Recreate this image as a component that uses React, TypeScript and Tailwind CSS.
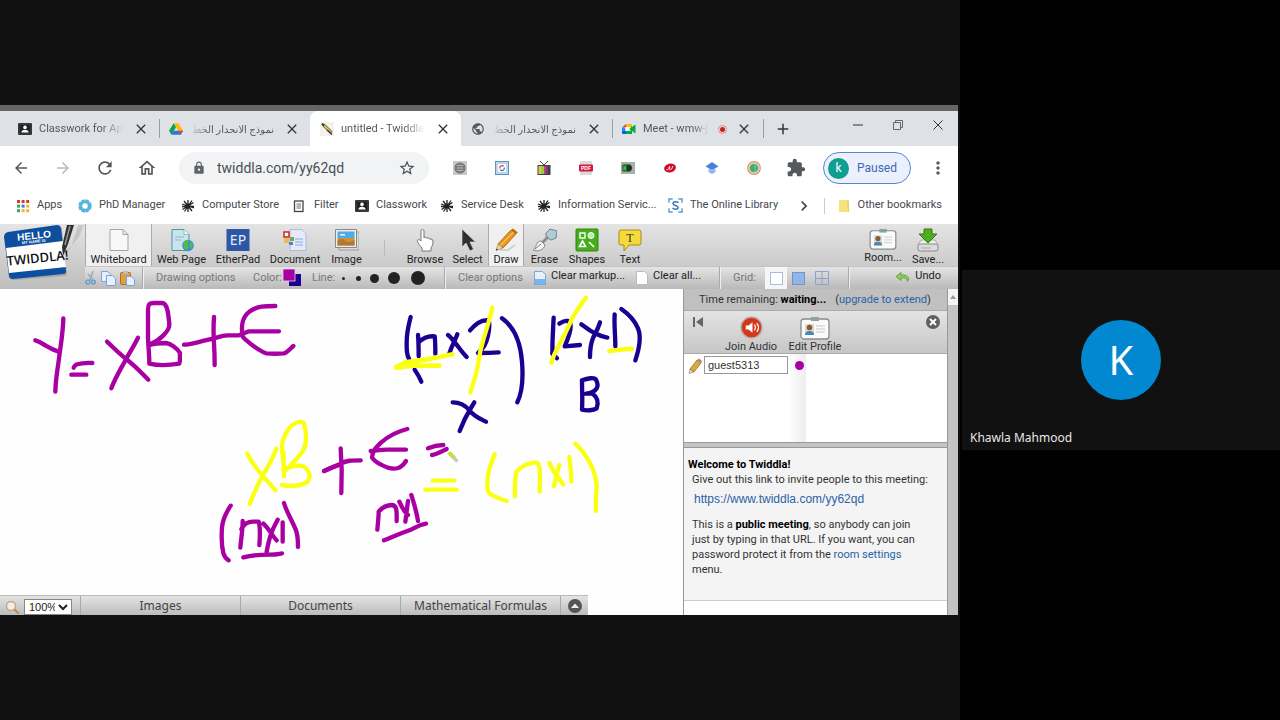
import React from "react";
import {
  MdAdd,
  MdArrowBack,
  MdArrowForward,
  MdChevronRight,
  MdClose,
  MdExtension,
  MdLock,
  MdMoreVert,
  MdOutlineHome,
  MdPublic,
  MdRefresh,
  MdStarBorder,
} from "react-icons/md";

const PURPLE = "#a800a2";
const NAVY = "#1c0092";
const YELLOW = "#fbff12";

/* ---------- small drawings ---------- */

const ClassroomIcon = () => (
  <svg viewBox="0 0 14 14" className="size-[14px] shrink-0">
    <rect y="1" width="14" height="12" rx="1" fill="#34383c" />
    <rect x="2" y="3" width="10" height="8" fill="#222" />
    <circle cx="7" cy="5.4" r="1.8" fill="#fff" />
    <path d="M3.4 10.6c0-2 1.6-2.8 3.6-2.8s3.6.8 3.6 2.8z" fill="#fff" />
  </svg>
);

const DriveIcon = () => (
  <svg viewBox="0 0 24 22" className="size-[14px] shrink-0">
    <path d="M8 1h8l8 13h-8z" fill="#ffba00" />
    <path d="M8 1l4 7-8 13-4-7z" fill="#0f9d58" />
    <path d="M8 14h16l-4 7H4z" fill="#2a74e8" />
    <path d="M16 14h8l-4 7z" fill="#e94335" />
  </svg>
);

const PencilFavicon = () => (
  <svg viewBox="0 0 14 14" className="size-[14px] shrink-0">
    <rect width="14" height="14" fill="#f1f1ee" />
    <path d="M2 2l3 .5 7 7-1.500 1.800-7.500-7z" fill="#d9c14a" stroke="#4a4520" strokeWidth=".8" />
    <path d="M7 8l5 4.500" stroke="#333" strokeWidth="1.4" />
    <path d="M2 1.600l2 2" stroke="#3a3a3a" strokeWidth="1.6" />
  </svg>
);

const MeetIcon = () => (
  <svg viewBox="0 0 14 14" className="size-[14px] shrink-0">
    <path d="M0 5.500L4 2v3.500z" fill="#ea4335" />
    <path d="M4 2h6v3H4z" fill="#fbbc04" />
    <path d="M0 5.500h3.500V9H0z" fill="#2684fc" />
    <path d="M0 9h4v3H1a1 1 0 0 1-1-1z" fill="#0066da" />
    <path d="M3.500 5h4v4h-4z" fill="#fff" />
    <path d="M4 9h6v3H4zM7.500 7L10 4v1l3.500-2.500v9L10 9v1z" fill="#00ac47" />
  </svg>
);

const AppsIcon = () => {
  const colors = ["#d93a30", "#d93a30", "#d93a30", "#3ba55a", "#3b7be0", "#f0b429", "#3ba55a", "#f0b429", "#f0b429"];
  return (
    <svg viewBox="0 0 14 14" className="size-[14px] shrink-0">
      {colors.map((c, i) => (
        <rect key={i} x={1 + (i % 3) * 4.6} y={1 + Math.floor(i / 3) * 4.6} width="3" height="3" fill={c} />
      ))}
    </svg>
  );
};

const RingIcon = () => (
  <svg viewBox="0 0 14 14" className="size-[14px] shrink-0">
    <circle cx="7" cy="7" r="4.700" fill="none" stroke="#55b4dc" strokeWidth="4" strokeDasharray="2.900 .8" />
    <circle cx="7" cy="7" r="4.500" fill="none" stroke="#55b4dc" strokeWidth="2.500" />
  </svg>
);

const SpiderStar = () => (
  <svg viewBox="0 0 14 14" className="size-[14px] shrink-0" stroke="#222" strokeWidth="1.300" fill="none">
    <path d="M7 1v12M1 5l12 4M1.500 10.500l11-7M3 2l8 10M11 1.500L3.500 12.500M1 7.500h12" />
    <circle cx="7" cy="7" r="1.800" fill="#222" />
  </svg>
);

const SheetIcon = () => (
  <svg viewBox="0 0 14 14" className="size-[14px] shrink-0" stroke="#444" fill="none">
    <rect x="1.500" y="2" width="8.500" height="10.500" strokeWidth="1.300" />
    <path d="M3.500 5h4.500M3.500 7h4.500M3.500 9h4.500" strokeWidth=".8" />
  </svg>
);

const LibraryIcon = () => (
  <svg viewBox="0 0 16 16" className="size-[15px] shrink-0" fill="none" stroke="#5a9bd5" strokeWidth="1.500">
    <path d="M1 5V1h4M11 1h4v4M15 11v4h-4M5 15H1v-4" />
    <path d="M11 5.200C10 3.600 5.400 3.600 5.400 6c0 2.300 5.400 1.600 5.400 4.200 0 2.500-4.800 2.300-5.800.4" stroke="#3b76b8" strokeWidth="1.600" />
  </svg>
);

const FolderIcon = () => (
  <svg viewBox="0 0 14 14" className="size-[14px] shrink-0">
    <path d="M2 1h9l1 1v11H2z" fill="#f7e27d" />
    <path d="M10 1l2 1v11h-1z" fill="#ecd15c" />
  </svg>
);

/* ---------- browser extensions ---------- */

const extensions: { name: string; art: React.ReactNode }[] = [
  {
    name: "Globe tool",
    art: (
      <>
        <rect width="14" height="14" fill="#c9c9c9" />
        <circle cx="7" cy="7" r="5.500" fill="#666" />
        <path d="M2 7h10M7 2v10M3 4.500h8M3 9.500h8M5 2.500v9M9 2.500v9" stroke="#bbb" strokeWidth=".7" />
      </>
    ),
  },
  {
    name: "Sync",
    art: (
      <>
        <rect x=".5" y=".5" width="13" height="13" fill="#b9d8ee" stroke="#5b93bd" />
        <rect x="3" y="3" width="8" height="8" fill="#fff" />
        <path d="M4.700 7.500a2.400 2.400 0 0 1 4-2.200" stroke="#d33" fill="none" strokeWidth="1.200" />
        <path d="M9.300 6.500a2.400 2.400 0 0 1-4 2.300" stroke="#2a6fc0" fill="none" strokeWidth="1.200" />
      </>
    ),
  },
  {
    name: "TV",
    art: (
      <>
        <path d="M3 0l4 4 4-4" stroke="#444" fill="none" />
        <rect x=".5" y="4" width="13" height="10" fill="#4a3a3a" />
        <path d="M1.500 5h2.500v8H1.500z" fill="#e8c93a" />
        <path d="M4 5h3v8H4z" fill="#8fd04a" />
        <path d="M7 5h2.500v8H7z" fill="#d23a6a" />
        <path d="M9.500 5H11v8H9.500z" fill="#3c55b8" />
      </>
    ),
  },
  {
    name: "PDF",
    art: (
      <>
        <rect x="1" width="12" height="14" rx="1" fill="#dadada" />
        <rect y="3.500" width="14" height="7" rx="1" fill="#d8173f" />
        <text x="7" y="9" textAnchor="middle" fontSize="5" fontWeight="700" fill="#fff" fontFamily="Liberation Sans">
          PDF
        </text>
      </>
    ),
  },
  {
    name: "Camera",
    art: (
      <>
        <rect y="1" width="14" height="12" fill="#a9b0a9" />
        <rect x="1" y="3" width="9" height="8" rx="2" fill="#3f7a4a" />
        <circle cx="8" cy="7" r="3" fill="#1d3324" />
        <circle cx="4" cy="7" r="1.600" fill="#35c455" />
      </>
    ),
  },
  {
    name: "Mendeley",
    art: (
      <>
        <ellipse cx="7" cy="7" rx="6" ry="4.400" fill="#cf0a2c" transform="rotate(-15 7 7)" />
        <path d="M3.500 8.500c2 1 2-1 3-3 .5 2-.5 3 1 3s1.500-2 2.500-3.500" stroke="#fff" fill="none" strokeWidth="1" />
      </>
    ),
  },
  {
    name: "Scholar",
    art: (
      <>
        <path d="M7 1l6.500 4.500L7 9 .5 5.500z" fill="#4a7fe0" />
        <path d="M3.500 7.500L7 9.500l3.500-2V11L7 13l-3.500-2z" fill="#8fb4f2" />
      </>
    ),
  },
  {
    name: "Web",
    art: (
      <>
        <circle cx="7" cy="7" r="6.300" fill="#f6e4b8" stroke="#dd9060" strokeWidth="1.200" />
        <circle cx="7" cy="7" r="4.600" fill="#56b9d8" />
        <path d="M3 6c2-3 4-3 5-2L6.500 6.500 8 9l-2 2C4 10 3 8 3 6zM9 5l2 1-.5 3-2-1z" fill="#4fae3d" />
      </>
    ),
  },
];

/* ---------- whiteboard tool icons ---------- */

const toolArt: Record<string, React.ReactNode> = {
  Whiteboard: (
    <path d="M3 1.500h13l5 5v16H3zM16 1.500v5h5" fill="#f8f8f8" stroke="#a5a5a5" />
  ),
  "Web Page": (
    <>
      <path d="M2 1.500h12l5 5v16H2z" fill="#c9e4ec" stroke="#4f93a4" />
      <path d="M14 1.500v5h5M5 9h9M5 12h6" fill="#fff" stroke="#8fbccb" />
      <circle cx="18" cy="17.500" r="5.800" fill="#3494cf" />
      <path d="M13.500 14c2-2.500 5-2.500 6-1.500l-2 3 1 3-2 3.500c-2 0-4-5-3-8zM20 14l3 2-1.500 5-2-2z" fill="#57b947" />
    </>
  ),
  EtherPad: (
    <>
      <rect x=".5" y="1" width="23" height="22" fill="#2d57a5" />
      <text x="12" y="17" textAnchor="middle" fontSize="14" fill="#e4ecfa" fontFamily="Noto Sans">
        EP
      </text>
    </>
  ),
  Document: (
    <>
      <path d="M7 1.500h12l4 4v17H7z" fill="#e3ebf8" stroke="#a9bcdc" />
      <path d="M12 11h8M12 14h8M12 17h8" stroke="#a8bde6" strokeWidth="1.300" />
      <rect x="1" y="4" width="5" height="5" fill="#fff" stroke="#d0312d" strokeWidth="1.600" />
      <rect x="1" y="10" width="5" height="5" fill="#efb74c" />
      <rect x="7" y="9" width="4" height="4" fill="#79a94d" />
      <rect x="6" y="14" width="4" height="3" fill="#4c82cd" />
    </>
  ),
  Image: (
    <>
      <path d="M4 4h20v18H4z" fill="#ddd" stroke="#999" />
      <path d="M.500 1.500h21v18H.500z" fill="#eee" stroke="#888" />
      <path d="M2.500 3.500h17v7h-17z" fill="#4eabe4" />
      <path d="M2.500 10h17v7.500h-17z" fill="#cf913d" />
      <path d="M2.500 13c3-3 6-2 8 0s5 1 9-1v5.500h-17z" fill="#b07a34" />
      <path d="M5 6h5v1.500H5z" fill="#e8f4fb" />
    </>
  ),
  Browse: (
    <path
      d="M8 13V3c0-2 3-2 3 0v7c1-1.500 3-1 3 .500 1-1.200 3-.700 3 1 1.200-1 3-.300 3 1.500 0 4-1 5-2 7v3H9v-3c-2-2-3.500-4-4.500-6.500C3.800 11.600 6 10.600 8 13z"
      fill="#fff"
      stroke="#777"
    />
  ),
  Select: <path d="M6 1v18l4-4 4 8 3.500-1.700L14 14h5.500z" fill="#303030" stroke="#e6e6e6" strokeWidth=".6" />,
  Draw: (
    <>
      <path d="M6 22l8 0 7-5" stroke="#d0d0d0" strokeWidth="2" fill="none" />
      <path d="M4 16L17 2l5 4L9 20z" fill="#e8941d" stroke="#a45e0a" strokeWidth=".8" />
      <path d="M6 18L19.500 4" stroke="#f9bd56" strokeWidth="1.500" />
      <path d="M4 16l5 4-7 2.500z" fill="#eed2a2" stroke="#8a6a3a" strokeWidth=".5" />
      <path d="M2 22.500l2-.700-1.200-1.200z" fill="#222" />
      <path d="M17 2l2-1.500 5 4L22 6z" fill="#c36c12" />
    </>
  ),
  Erase: (
    <>
      <path d="M13 5l4-4 7 2-1 7-5 2-5-3z" fill="#aecdd3" stroke="#71858b" />
      <path d="M15 9L9 15" stroke="#8a8a8a" strokeWidth="3" />
      <path d="M8 13c-5 0-4 6-8 9 5 2 11 0 12-5z" fill="#f4f4f4" stroke="#888" />
      <path d="M2 21l6-5" stroke="#777" />
    </>
  ),
  Shapes: (
    <>
      <rect x="1" y="1" width="22" height="22" rx="1" fill="#46ae1c" stroke="#2f8410" />
      <rect x="5" y="5" width="5" height="5" fill="none" stroke="#fff" strokeWidth="1.400" />
      <circle cx="16" cy="7.500" r="3" fill="#b9ecaa" stroke="#fff" />
      <path d="M4.500 18.500L7.500 13l3 5.500zM14 14l5 5" fill="none" stroke="#fff" strokeWidth="1.600" />
    </>
  ),
  Text: (
    <>
      <path d="M3 2h18a2 2 0 0 1 2 2v11a2 2 0 0 1-2 2H11l-5 6v-6H3a2 2 0 0 1-2-2V4a2 2 0 0 1 2-2z" fill="#f5da3c" stroke="#a58d16" />
      <text x="12" y="14" textAnchor="middle" fontSize="12" fill="#3a3417" fontFamily="Liberation Serif">
        T
      </text>
    </>
  ),
  Save: (
    <>
      <path d="M5 12h14l3 5H2z" fill="#eee" stroke="#999" strokeWidth=".7" />
      <rect x="2" y="16" width="20" height="7" rx="2" fill="#dcdcdc" stroke="#888" />
      <path d="M8 1h8v5h5l-9 9-9-9h5z" fill="#4fae1d" stroke="#2f7d0b" />
      <path d="M5 20h10" stroke="#aaa" />
    </>
  ),
};

const Badge = () => (
  <svg viewBox="0 0 30 24" className="h-6 w-[30px]">
    <rect x="1" y="3" width="28" height="20" rx="3" fill="#fafafa" stroke="#8b8b8b" strokeWidth="1.300" />
    <path d="M11 1h8v4h-8z" fill="#8ba3a6" />
    <rect x="5" y="8" width="9" height="11" fill="#d9d9cf" />
    <circle cx="9.500" cy="11.500" r="2.800" fill="#8a5a32" />
    <path d="M5 19c0-3 1.500-4 4.500-4s4.500 1 4.500 4z" fill="#4a86b8" />
    <path d="M16 10h9M16 13h9M16 16h9" stroke="#c9c9c9" />
  </svg>
);

function Tool({ name, label, width, active }: { name: string; label?: string; width: string; active?: boolean }) {
  return (
    <button
      className={`${width} flex h-[42px] shrink-0 flex-col items-center whitespace-nowrap pt-1 text-[11px] leading-4 text-[#222] ${
        active ? "border-x border-x-[#aaa] bg-[#f0f0f0]" : ""
      }`}
    >
      {name === "Room" ? (
        <Badge />
      ) : (
        <svg viewBox="0 0 24 24" className="size-6 shrink-0">
          {toolArt[name]}
        </svg>
      )}
      {label ?? name}
    </button>
  );
}

const Rule = () => <span className="h-full w-[2px] border-l border-[#a9a9a9] bg-[#eee]" />;

const Logo = () => (
  <div className="w-[85px] shrink-0 bg-linear-to-b from-[#e4e4e4] via-[#d0d0d0] to-[#bdbdbd]">
    <svg viewBox="0 0 85 65" className="h-[65px] w-[85px]">
      <path d="M63 32l8-8L78 1l6 0-5 12z" fill="#999" opacity=".35" />
      <path d="M9 9l49-7q3 0 4 3l5 44q0 3-3 3l-50 4q-4 0-4-3L5 14q0-4 4-5z" fill="#888" opacity=".5" />
      <path d="M8 8l49-7q3 0 4 3l5 43q0 3-3 3l-50 5q-4 0-4-3L4 13q0-4 4-5z" fill="#0b4f9e" />
      <path d="M6 24l57-7 3 26-57 6z" fill="#fff" />
      <g transform="rotate(-6 34 30)" fill="#fff" textAnchor="middle">
        <text x="36" y="15" fontSize="10" fontWeight="700" fontFamily="Liberation Sans">
          HELLO
        </text>
        <text x="35" y="19" fontSize="4" fontWeight="700" fontFamily="Liberation Sans">
          MY NAME IS
        </text>
        <text x="37" y="39" fontSize="13" fontWeight="600" fill="#111" fontFamily="Open Sans">
          TWIDDLA!
        </text>
      </g>
      <path d="M67 1h7l-6 19-5 12-1-9z" fill="#2f2f2f" />
      <path d="M70 2l-5 19" stroke="#999" strokeWidth="1.500" />
    </svg>
  </div>
);

/* ---------- browser chrome ---------- */

function Tab({ icon, title, rtl, active, recording }: { icon: React.ReactNode; title: string; rtl?: boolean; active?: boolean; recording?: boolean }) {
  return (
    <div
      className={`flex w-[151px] shrink-0 items-center pl-[10px] pt-px ${
        active ? "rounded-t-lg bg-white" : ""
      }`}
    >
      {icon}
      <button
        dir={rtl ? "rtl" : "ltr"}
        className={`ml-[7px] overflow-hidden whitespace-nowrap text-[#55585d] ${
          recording ? "w-[66px]" : "w-[84px]"
        } ${
          rtl
            ? "text-right text-[10px] [mask-image:linear-gradient(to_left,#000_75%,transparent)]"
            : "text-left text-[11px] [mask-image:linear-gradient(to_right,#000_75%,transparent)]"
        }`}
      >
        {title}
      </button>
      {recording && (
        <span className="ml-[9px] flex size-[9px] items-center justify-center rounded-full border border-[#e88]">
          <span className="size-[5px] rounded-full bg-[#c5221f]" />
        </span>
      )}
      <button aria-label={`Close ${title}`} className={recording ? "ml-[9px]" : "ml-[10px]"}>
        <MdClose className="size-4 text-[#33363a]" />
      </button>
    </div>
  );
}

function NavButton({ label, children }: { label: string; children: React.ReactNode }) {
  return (
    <button aria-label={label} className="flex w-[42px] shrink-0 items-center justify-center text-[#55585c]">
      {children}
    </button>
  );
}

const bookmarks = [
  { label: "Apps", icon: <AppsIcon />, width: "w-[62px]" },
  { label: "PhD Manager", icon: <RingIcon />, width: "w-[103px]" },
  { label: "Computer Store", icon: <SpiderStar />, width: "w-[112px]" },
  { label: "Filter", icon: <SheetIcon />, width: "w-[62px]" },
  { label: "Classwork", icon: <ClassroomIcon />, width: "w-[85px]" },
  { label: "Service Desk", icon: <SpiderStar />, width: "w-[97px]" },
  { label: "Information Servic...", icon: <SpiderStar />, width: "w-[131px]" },
  { label: "The Online Library", icon: <LibraryIcon />, width: "w-[122px]" },
];

function BrowserChrome() {
  return (
    <header className="font-[Roboto,'DejaVu_Sans',sans-serif]">
      <div className="flex h-[35px] items-stretch bg-[#dee1e6] pl-2">
        <Tab icon={<ClassroomIcon />} title="Classwork for App" />
        <span className="my-2 -mr-px w-px bg-[#9a9da1]" />
        <Tab icon={<DriveIcon />} title="نموذج الانحدار الخط" rtl />
        <Tab icon={<PencilFavicon />} title="untitled - Twiddla" active />
        <Tab icon={<MdPublic className="size-[14px] shrink-0 text-[#55585c]" />} title="نموذج الانحدار الخط" rtl />
        <span className="my-2 -mr-px w-px bg-[#9a9da1]" />
        <Tab icon={<MeetIcon />} title="Meet - wmw-j" recording />
        <span className="my-2 w-px bg-[#9a9da1]" />
        <button aria-label="New tab" className="ml-[10px] text-[#33363a]">
          <MdAdd className="size-[18px]" />
        </button>
        <div className="ml-auto flex items-center gap-[30px] pb-2 pr-[15px] text-[#333]">
          <button aria-label="Minimize">
            <svg viewBox="0 0 10 10" className="size-[10px]" stroke="currentColor">
              <path d="M0 5h10" />
            </svg>
          </button>
          <button aria-label="Restore">
            <svg viewBox="0 0 10 10" className="size-[10px]" stroke="#666" fill="none">
              <path d="M.500 2.500h7v7h-7zM2.500 2.500v-2h7v7h-2" />
            </svg>
          </button>
          <button aria-label="Close window">
            <svg viewBox="0 0 10 10" className="size-[10px]" stroke="currentColor">
              <path d="M.500.500l9 9M9.500.500l-9 9" />
            </svg>
          </button>
        </div>
      </div>

      <div className="flex h-11 items-center bg-white">
        <NavButton label="Back"><MdArrowBack className="size-[18px]" /></NavButton>
        <NavButton label="Forward"><MdArrowForward className="size-[18px] text-[#b9bbbe]" /></NavButton>
        <NavButton label="Reload"><MdRefresh className="size-5" /></NavButton>
        <NavButton label="Home"><MdOutlineHome className="size-5" /></NavButton>
        <div className="ml-[11px] flex h-8 w-[250px] shrink-0 items-center rounded-full bg-[#f1f3f4] px-[13px]">
          <MdLock className="size-[14px] shrink-0 text-[#5f6368]" />
          <input
            aria-label="Address"
            defaultValue="twiddla.com/yy62qd"
            className="ml-[11px] w-full min-w-0 bg-transparent text-[14px] text-[#4b4e52] outline-none"
          />
          <button aria-label="Bookmark this page">
            <MdStarBorder className="size-[18px] text-[#4b4e52]" />
          </button>
        </div>
        <div className="ml-[10px] flex">
          {extensions.map((e) => (
            <NavButton key={e.name} label={e.name}>
              <svg viewBox="0 0 14 14" className="size-[14px]">{e.art}</svg>
            </NavButton>
          ))}
          <NavButton label="Extensions"><MdExtension className="size-5" /></NavButton>
        </div>
        <button className="ml-[6px] flex h-8 w-[88px] shrink-0 items-center rounded-full border border-[#5b83cf] bg-[#eaf1fd] pl-1 text-[12px] text-[#3f67b8]">
          <span className="mr-2 flex size-[21px] items-center justify-center rounded-full bg-[#109d94] text-[12px] text-white">k</span>
          Paused
        </button>
        <button aria-label="Menu" className="ml-auto mr-[10px] text-[#55585c]">
          <MdMoreVert className="size-5" />
        </button>
      </div>

      <nav className="flex h-[34px] items-center bg-white pb-[3px] pl-4 text-[11px] text-[#45484c]">
        {bookmarks.map((b) => (
          <a key={b.label} href="#" className={`${b.width} flex shrink-0 items-center gap-[7px] whitespace-nowrap`}>
            {b.icon}
            {b.label}
          </a>
        ))}
        <button aria-label="More bookmarks" className="ml-1">
          <MdChevronRight className="size-5 text-[#45484c]" />
        </button>
        <span className="ml-auto h-4 w-px bg-[#ccc]" />
        <a href="#" className="ml-3 mr-4 flex items-center gap-[7px] whitespace-nowrap">
          <FolderIcon />
          Other bookmarks
        </a>
      </nav>
    </header>
  );
}

/* ---------- Twiddla ---------- */

function OptionsBar() {
  return (
    <div className="flex h-[22px] items-center bg-linear-to-b from-[#e4e4e4] to-[#b9b9b9] text-[11px] text-[#777]">
      <div className="flex h-full w-[57px] shrink-0 items-center gap-1">
        <button aria-label="Cut">
          <svg viewBox="0 0 12 14" className="h-[14px] w-3" fill="none" stroke="#6a9cc4" strokeWidth="1.500">
            <path d="M8 0L5 9M3 3l5 6" stroke="#9ab" />
            <circle cx="3" cy="11" r="2" />
            <circle cx="8.500" cy="11" r="1.800" />
          </svg>
        </button>
        <button aria-label="Copy">
          <svg viewBox="0 0 15 15" className="size-[15px]" fill="#e6f0fc" stroke="#7ba3d4">
            <path d="M.500.500h6l3 3v7h-9z" />
            <path d="M5.500 4.500h6l3 3v7h-9z" />
          </svg>
        </button>
        <button aria-label="Paste">
          <svg viewBox="0 0 15 15" className="size-[15px]">
            <rect x=".5" y="1.500" width="10" height="12" rx="1" fill="#dca04a" stroke="#a8712a" />
            <rect x="3" y="0" width="5" height="3" fill="#bbb" />
            <path d="M6.500 5.500h5l3 3v6h-8z" fill="#e6f0fc" stroke="#7ba3d4" />
          </svg>
        </button>
      </div>
      <Rule />
      <span className="ml-3 w-[97px] shrink-0 whitespace-nowrap">Drawing options</span>
      <span className="w-[29px] shrink-0">Color:</span>
      <button aria-label="Pick color">
        <svg viewBox="0 0 20 20" className="size-5">
          <rect x="7" y="6" width="12" height="12" fill={NAVY} />
          <rect x="1" y="1" width="12" height="12" fill={PURPLE} stroke="#ddd" strokeWidth=".8" />
        </svg>
      </button>
      <span className="ml-[10px] w-[26px] shrink-0">Line:</span>
      <div className="flex w-[106px] shrink-0 items-center">
        <button aria-label="Line 1" className="ml-[4px] size-[3px] shrink-0 rounded-full bg-[#222]" />
        <button aria-label="Line 2" className="ml-[11px] size-[5px] shrink-0 rounded-full bg-[#222]" />
        <button aria-label="Line 3" className="ml-[9px] size-[9px] shrink-0 rounded-full bg-[#222]" />
        <button aria-label="Line 4" className="ml-[9px] size-[12px] shrink-0 rounded-full bg-[#222]" />
        <button aria-label="Line 5" className="ml-[11px] size-[14px] shrink-0 rounded-full bg-[#222]" />
      </div>
      <Rule />
      <span className="ml-3 w-[76px] shrink-0 whitespace-nowrap">Clear options</span>
      <button className="flex w-[102px] shrink-0 items-center gap-[5px] whitespace-nowrap pb-1 text-[#222]">
        <svg viewBox="0 0 12 14" className="mt-1 h-[14px] w-3 shrink-0">
          <path d="M.500.500h8l3 3v10H.500z" fill="#e4f1fd" stroke="#7ba6d6" />
          <path d="M1 8h10v5H1z" fill="#7ab4ee" />
        </svg>
        Clear markup...
      </button>
      <button className="flex w-[83px] shrink-0 items-center gap-[5px] whitespace-nowrap pb-1 text-[#222]">
        <svg viewBox="0 0 12 14" className="mt-1 h-[14px] w-3 shrink-0">
          <path d="M.500.500h8l3 3v10H.500z" fill="#fff" stroke="#bbb" />
        </svg>
        Clear all...
      </button>
      <Rule />
      <span className="ml-3 w-[32px] shrink-0">Grid:</span>
      <button aria-label="No grid" className="flex h-full w-[22px] items-center justify-center bg-[#f6f6f6]">
        <span className="size-[13px] border border-[#a5bbe0] bg-white" />
      </button>
      <button aria-label="Fine grid" className="ml-[5px] size-[13px] border border-[#6f95cf] bg-[#92b5e6]" />
      <button aria-label="Coarse grid" className="ml-[10px]">
        <svg viewBox="0 0 14 14" className="size-[14px]" fill="none" stroke="#8da3c8">
          <path d="M.500.500h13v13H.500zM7 .500v13M.500 7.500h13" />
        </svg>
      </button>
      <span className="ml-[19px] h-full"><span className="block h-full w-[2px] border-l border-[#a9a9a9] bg-[#eee]" /></span>
      <button className="ml-auto mr-[17px] flex items-center gap-[5px] pb-[3px] text-[#222]">
        <svg viewBox="0 0 15 10" className="h-[10px] w-[15px]">
          <path d="M6 .500L1 4.500l5 4V6c3-.500 6-.500 6.500 3.500C15.500 6 12 2.500 6 3z" fill="#8fce5c" stroke="#4b9a22" strokeWidth=".8" />
        </svg>
        Undo
      </button>
    </div>
  );
}

function Toolbar() {
  return (
    <div className="flex">
      <Logo />
      <div className="min-w-0 flex-1">
        <div className="flex border-b border-[#c4c4c4] bg-linear-to-b from-[#e4e4e4] to-[#cbcbcb]">
          <Tool name="Whiteboard" width="w-[67px]" active />
          <Tool name="Web Page" width="w-[59px]" />
          <Tool name="EtherPad" width="w-[54px]" />
          <Tool name="Document" width="w-[60px]" />
          <Tool name="Image" width="w-[43px]" />
          <span className="ml-4 mr-[18px] mt-4 h-4 w-px bg-[#bbb]" />
          <Tool name="Browse" width="w-[44px]" />
          <Tool name="Select" width="w-[41px]" />
          <Tool name="Draw" width="w-[36px]" active />
          <Tool name="Erase" width="w-[41px]" />
          <Tool name="Shapes" width="w-[44px]" />
          <Tool name="Text" width="w-[42px]" />
          <div className="ml-auto flex pr-[7px]">
            <Tool name="Room" label="Room..." width="w-[44px]" />
            <Tool name="Save" label="Save..." width="w-[46px]" />
          </div>
        </div>
        <OptionsBar />
      </div>
    </div>
  );
}

const leftStrokes: [string, string, number?][] = [
  [PURPLE, "M106 166c14 4 18 8 30 15s22 14 38 18M190 100c-1 45-8 80-13 120s-10 60-11 100"],
  [PURPLE, "M221 248c4-10 10-11 26-13s20-1 30-1M214 269h45"],
  [PURPLE, "M321 170c20 18 34 34 60 54s40 36 64 60M414 158c-14 28-26 46-40 72s-28 48-40 80"],
  [PURPLE, "M450 178c26-10 60-40 58-60s-4-64-22-64h-24c-14 0-18 4-18 20v80c0 24 4 50 4 82 26 6 66 4 90 0 4-6 0-18 2-32-8-14-28-28-42-30-14 0-32 0-48 6"],
  [PURPLE, "M552 179c20 0 40-8 70-14s40-14 60-14h35l30-12h90M642 96c-2 30-2 50 0 80s2 40 2 64"],
  [PURPLE, "M826 63c-30 0-54 0-76 16s-28 38-22 76c12 14 48 42 70 50 20 2 34 2 54 0 10-2 16-12 28-22"],
  [YELLOW, "M742 506c10 20 18 32 34 52s34 38 50 58M829 491c-8 22-16 40-30 62s-30 52-50 104"],
  [YELLOW, "M852 540c-8-50-10-66 4-92s34-42 54-36c8 20 12 52 4 74s-32 46-62 74M850 500l2 74M850 554c24-12 54-16 66-6s18 28 8 40-44 18-78 12"],
  [PURPLE, "M972 558c16-6 28-14 50-20"],
  [PURPLE, "M692 662c-12 18-24 38-26 66s-2 52 4 76c2 8 6 16 16 22"],
  [PURPLE, "M728 708c0 28-4 46-7 80M724 732c8-14 16-22 34-22h18c6 20 4 46 2 70M790 716c16 14 22 30 40 50M833 704c-16 30-24 46-33 96M848 712v58M730 817c30-8 60-8 80-8s24-2 36-4"],
  [PURPLE, "M852 654c8 28 24 52 36 82 6 16 6 30 6 50"],
];

const rightStrokes: [string, string, number?][] = [
  [NAVY, "M212 96c-8 30-12 50-12 76s0 36 8 52M224 254c8 12 14 22 20 36"],
  [NAVY, "M234 150c2 24 2 44 2 64M236 172c14-14 30-20 48-18 2 16 2 34 2 52M324 150c18 14 36 46 56 66M352 148c-8 22-18 36-24 58"],
  [NAVY, "M390 136c14-16 30-32 56-30 4 10 2 26-2 46s-14 40-30 52c18 0 36 0 62-2"],
  [NAVY, "M486 100c40 28 56 80 60 130s2 90-14 122"],
  [NAVY, "M641 98c-2 40-4 60-4 108l14 14M658 116c20-12 34-12 34 8s-8 38-18 60l46-4"],
  [NAVY, "M724 118c16 10 20 16 36 24s20 12 42 16M780 112c-8 26-16 34-22 50s-8 26-8 54M824 88c-2 34 2 60 2 96M844 72c26 18 40 34 50 58s4 60-8 96"],
  [NAVY, "M338 352c22 0 36 6 50 24s26 22 50 34M403 352c-14 24-26 38-44 86"],
  [NAVY, "M726 286c0 30 2 60 0 88 14 4 34 2 44-4 6-18 2-34-12-44h-20c16-2 26-6 32-16s2-18-2-26-26-4-42 2"],
  [PURPLE, "M-48 558c16-6 30-14 50-22 20-10 30-10 60-10M2 490c4 50 4 90 2 134"],
  [PURPLE, "M202 432c-40 10-60 24-78 40-16 16-26 24-28 46 8 12 26 22 48 30 20 6 38 6 54-20M92 498c20-2 34-4 50-4h56"],
  [PURPLE, "M264 490c14-6 28-10 46-10M276 510c14-2 28-10 44-18"],
  [PURPLE, "M112 734c2-20 4-40 4-54 10-12 26-20 40-20 16 2 14 20 14 48M178 650c8 18 16 32 26 40M204 648l-8 62M214 630c8 26 16 50 20 78M132 766c30-12 46-20 70-28s30-18 56-22"],
  [YELLOW, "M457 68c-8 36-18 66-26 92s-14 54-18 84-14 50-22 78"],
  [YELLOW, "M168 246l28-14 60-8 82-16M168 248l50-6h80", 14],
  [YELLOW, "M738 38c-18 24-34 44-46 72s-28 58-40 80-14 30-18 44M808 198c20-2 44-6 68-6"],
  [YELLOW, "M464 508c-12 30-24 60-22 92 0 12 2 24 10 28 16 8 24 14 48 20M525 634c-2-36 0-50 4-74 14-16 36-26 58-28 14 0 14 24 12 88M628 534c10 22 22 40 42 64M658 540c-6 20-10 40-16 64M688 516c4 30 6 44 6 74M706 476c38 36 62 84 64 130-2 24-4 40-2 72"],
  [YELLOW, "M278 587h64M256 614h94"],
];

const Strokes = ({ list }: { list: [string, string, number?][] }) => (
  <>
    {list.map(([stroke, d, w], i) => (
      <path key={i} d={d} stroke={stroke} strokeWidth={w ?? 13} />
    ))}
  </>
);

function Whiteboard() {
  return (
    <div className="flex min-w-0 flex-1 flex-col justify-between overflow-hidden bg-[#fefefe]">
      <svg
        viewBox="0 0 683 306"
        className="h-[306px] w-[683px] shrink-0"
        fill="none"
        strokeLinecap="round"
        strokeLinejoin="round"
        role="img"
        aria-label="Whiteboard drawing"
      >
        <g transform="translate(0 -4) scale(.33333)">
          <Strokes list={leftStrokes} />
        </g>
        <g transform="translate(340 -4) scale(.33333)">
          <Strokes list={rightStrokes} />
          <path d="M326 502l18 18" stroke="#c5df3a" strokeWidth="12" strokeLinecap="butt" />
          <path d="M342 518l10 12" stroke="#c9c9c4" strokeWidth="10" strokeLinecap="butt" />
        </g>
      </svg>
      <div className="flex h-5 w-[588px] items-stretch border-t border-[#bbb] bg-linear-to-b from-[#e4e4e4] to-[#bcbcbc] font-['Noto_Sans',sans-serif] text-[12px] text-[#444]">
        <div className="flex w-20 shrink-0 items-end gap-1 pl-1">
          <svg viewBox="0 0 16 16" className="size-4" fill="none">
            <circle cx="7" cy="7" r="4.500" fill="#eee" stroke="#c9a878" strokeWidth="1.500" />
            <path d="M10.500 10.500l4 4" stroke="#c08a40" strokeWidth="2" />
          </svg>
          <div className="flex h-4 w-[48px] items-center border border-[#888] bg-white">
            <select
              aria-label="Zoom"
              className="w-full bg-transparent font-['Liberation_Sans',sans-serif] text-[11px] leading-3 text-[#222]"
            >
              <option>100%</option>
            </select>
          </div>
        </div>
        <button className="w-40 border-l border-[#aaa] leading-4">Images</button>
        <button className="w-40 border-l border-[#aaa] leading-4">Documents</button>
        <button className="w-40 border-l border-[#aaa] leading-4">Mathematical Formulas</button>
        <button aria-label="Expand" className="flex flex-1 items-center justify-center border-l border-[#aaa]">
          <svg viewBox="0 0 14 14" className="size-[14px]">
            <circle cx="7" cy="7" r="7" fill="#555" />
            <path d="M3 9l4-4.500L11 9z" fill="#eee" />
          </svg>
        </button>
      </div>
    </div>
  );
}

function SidePanel() {
  return (
    <aside className="flex w-[275px] shrink-0 text-[11px] leading-[15px] text-[#333]">
      <div className="flex min-w-0 flex-1 flex-col border-x border-[#999]">
        <div className="flex h-[22px] shrink-0 items-center gap-[9px] whitespace-nowrap border-b border-[#aaa] bg-[#c0c0c0] pl-[15px]">
          <span>
            Time remaining: <b className="text-black">waiting...</b>
          </span>
          <span>
            (<a href="#" className="text-[#2a62a8]">upgrade to extend</a>)
          </span>
        </div>
        <div className="flex h-[43px] shrink-0 items-start border-b border-[#aaa] bg-linear-to-b from-[#e4e4e4] to-[#c6c6c6] pl-[9px]">
          <button aria-label="Collapse" className="mt-[6px]">
            <svg viewBox="0 0 10 10" className="size-[10px]" fill="#666">
              <path d="M0 0h2v10H0zM10 0v10L3 5z" />
            </svg>
          </button>
          <button className="ml-[15px] mt-[5px] flex w-[66px] flex-col items-center">
            <svg viewBox="0 0 24 24" className="size-[23px]">
              <circle cx="12" cy="12" r="11" fill="#d5371c" stroke="#b9b1ae" strokeWidth="1.500" />
              <path d="M6 10h3l4-3.500v11L9 14H6z" fill="#fff" />
              <path d="M15 9c1.500 2 1.500 4 0 6M17.500 7.500c2.500 3 2.500 6 0 9" stroke="#fff" fill="none" strokeWidth="1.300" />
            </svg>
            <span className="whitespace-nowrap">Join Audio</span>
          </button>
          <button className="mt-[5px] flex w-[62px] flex-col items-center">
            <span className="h-[23px]"><Badge /></span>
            <span className="whitespace-nowrap">Edit Profile</span>
          </button>
          <button aria-label="Close panel" className="ml-auto mr-[7px] mt-1">
            <svg viewBox="0 0 14 14" className="size-[14px]">
              <circle cx="7" cy="7" r="7" fill="#5f5f5f" />
              <path d="M4 4l6 6M10 4l-6 6" stroke="#fff" strokeWidth="2" />
            </svg>
          </button>
        </div>
        <div className="flex h-[88px] shrink-0 bg-white">
          <div className="flex w-[122px] items-start bg-linear-to-r from-white from-85% to-[#eee] pl-1 pt-[2px]">
            <svg viewBox="0 0 14 16" className="mt-[2px] h-4 w-[14px] shrink-0">
              <path d="M2 11L9 2l4 3-7 9z" fill="#d9a93a" stroke="#8d6a1c" strokeWidth=".7" />
              <path d="M2 11l4 3-5 1.500z" fill="#ecd3a8" stroke="#555" strokeWidth=".4" />
              <path d="M9 2l2-1.500L14 3l-1 2z" fill="#c07a86" />
            </svg>
            <input
              aria-label="Your name"
              defaultValue="guest5313"
              className="ml-[2px] h-[18px] w-[84px] shrink-0 border border-[#999] bg-white px-[3px] font-['Liberation_Sans',sans-serif] text-[11px]"
            />
            <span className="ml-[7px] mt-[5px] size-[9px] shrink-0 rounded-full bg-[#a800a2]" />
          </div>
        </div>
        <div className="h-[6px] shrink-0 border-y border-[#999] bg-[#c4c4c4]" />
        <div className="flex-1 border-b border-[#ccc] bg-[#f4f4f4] pl-1 pt-[9px]">
          <h2 className="font-bold text-black">Welcome to Twiddla!</h2>
          <div className="pl-1">
            <p className="whitespace-nowrap">Give out this link to invite people to this meeting:</p>
            <a href="#" className="mt-[5px] block pl-[2px] font-['Liberation_Sans',sans-serif] text-[12px] text-[#2a62a8]">
              https://www.twiddla.com/yy62qd
            </a>
            <p className="mt-[10px] pr-[30px]">
              This is a <b className="text-black">public meeting</b>, so anybody can join just by typing in that URL. If you want, you can
              password protect it from the <a href="#" className="text-[#2a62a8]">room settings</a> menu.
            </p>
          </div>
        </div>
        <div className="h-[14px] shrink-0 bg-white" />
      </div>
      <div className="w-[10px] shrink-0 bg-[#c4c4c4]">
        <button aria-label="Scroll up" className="flex h-4 w-full items-center justify-center bg-[#f4f4f4]">
          <svg viewBox="0 0 6 4" className="h-1 w-[6px]">
            <path d="M0 4l3-4 3 4z" fill="#999" />
          </svg>
        </button>
      </div>
    </aside>
  );
}

export default function App() {
  return (
    <div className="flex min-h-screen overflow-hidden bg-black">
      <main className="flex min-w-0 flex-1 flex-col justify-center bg-[#111] pr-[2px]">
        <div className="border-t-[6px] border-[#666] bg-white">
          <BrowserChrome />
          <div className="font-[Roboto,sans-serif]">
            <Toolbar />
            <div className="flex">
              <Whiteboard />
              <SidePanel />
            </div>
          </div>
        </div>
      </main>
      <section className="flex w-1/4 shrink-0 items-center pl-[2px]">
        <div className="flex h-[180px] w-full flex-col bg-[#111]">
          <div className="mt-[50px] flex size-20 shrink-0 items-center justify-center self-center rounded-full bg-[#0288d1] font-['Noto_Sans',sans-serif] text-[40px] text-white">
            K
          </div>
          <p className="mt-auto pb-[2px] pl-2 font-['Noto_Sans',sans-serif] text-[12px] leading-5 text-[#e8e8e8]">Khawla Mahmood</p>
        </div>
      </section>
    </div>
  );
}
